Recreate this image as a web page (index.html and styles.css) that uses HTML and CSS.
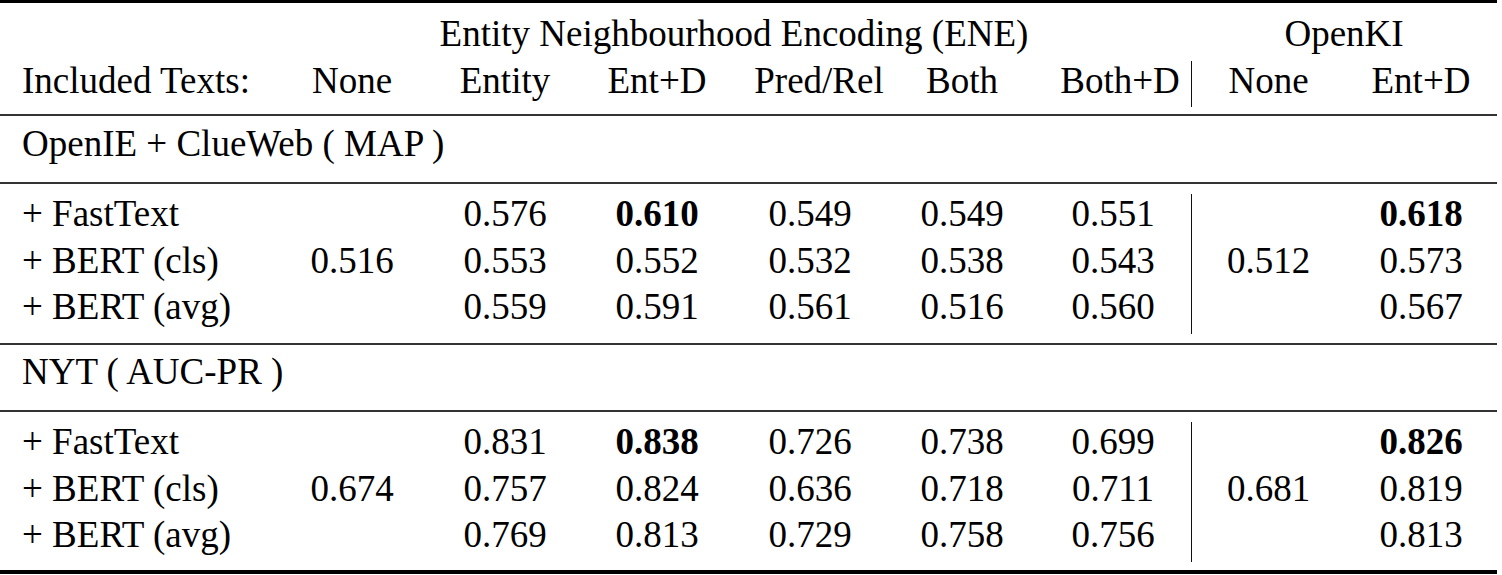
FILE: index.html
```html
<!DOCTYPE html>
<html>
<head>
<meta charset="utf-8">
<link rel="stylesheet" href="styles.css">
</head>
<body>
<div class="table">
  <div class="rule heavy"></div>
  <div class="row head1">
    <div class="cell ene">Entity Neighbourhood Encoding (ENE)</div>
    <div class="cell openki">OpenKI</div>
  </div>
  <div class="row head2">
    <div class="cell label">Included Texts:</div>
    <div class="cell">None</div>
    <div class="cell">Entity</div>
    <div class="cell">Ent+D</div>
    <div class="cell shift-pred">Pred/Rel</div>
    <div class="cell">Both</div>
    <div class="cell shift-bothd">Both+D</div>
    <div class="cell sep">None</div>
    <div class="cell">Ent+D</div>
  </div>
  <div class="rule thin after-head"></div>
  <div class="section first">OpenIE + ClueWeb ( MAP )</div>
  <div class="rule thin after-section"></div>
  <div class="group">
    <div class="row">
      <div class="cell label">+ FastText</div>
      <div class="cell"></div>
      <div class="cell">0.576</div>
      <div class="cell best">0.610</div>
      <div class="cell">0.549</div>
      <div class="cell">0.549</div>
      <div class="cell">0.551</div>
      <div class="cell sep"></div>
      <div class="cell best">0.618</div>
    </div>
    <div class="row">
      <div class="cell label">+ BERT (cls)</div>
      <div class="cell">0.516</div>
      <div class="cell">0.553</div>
      <div class="cell">0.552</div>
      <div class="cell">0.532</div>
      <div class="cell">0.538</div>
      <div class="cell">0.543</div>
      <div class="cell sep">0.512</div>
      <div class="cell">0.573</div>
    </div>
    <div class="row">
      <div class="cell label">+ BERT (avg)</div>
      <div class="cell"></div>
      <div class="cell">0.559</div>
      <div class="cell">0.591</div>
      <div class="cell">0.561</div>
      <div class="cell">0.516</div>
      <div class="cell">0.560</div>
      <div class="cell sep"></div>
      <div class="cell">0.567</div>
    </div>
  </div>
  <div class="rule thin after-group"></div>
  <div class="section">NYT ( AUC-PR )</div>
  <div class="rule thin after-section"></div>
  <div class="group">
    <div class="row">
      <div class="cell label">+ FastText</div>
      <div class="cell"></div>
      <div class="cell">0.831</div>
      <div class="cell best">0.838</div>
      <div class="cell">0.726</div>
      <div class="cell">0.738</div>
      <div class="cell">0.699</div>
      <div class="cell sep"></div>
      <div class="cell best">0.826</div>
    </div>
    <div class="row">
      <div class="cell label">+ BERT (cls)</div>
      <div class="cell">0.674</div>
      <div class="cell">0.757</div>
      <div class="cell">0.824</div>
      <div class="cell">0.636</div>
      <div class="cell">0.718</div>
      <div class="cell">0.711</div>
      <div class="cell sep">0.681</div>
      <div class="cell">0.819</div>
    </div>
    <div class="row">
      <div class="cell label">+ BERT (avg)</div>
      <div class="cell"></div>
      <div class="cell">0.769</div>
      <div class="cell">0.813</div>
      <div class="cell">0.729</div>
      <div class="cell">0.758</div>
      <div class="cell">0.756</div>
      <div class="cell sep"></div>
      <div class="cell">0.813</div>
    </div>
  </div>
  <div class="rule heavy bottom"></div>
</div>
</body>
</html>
```

FILE: styles.css
```css
* {
  box-sizing: border-box;
}

html, body {
  margin: 0;
  padding: 0;
  background: #ffffff;
}

body {
  font-family: "Liberation Serif", "Times New Roman", serif;
  font-size: 37px;
  color: #000000;
}

.table {
  width: 1497px;
  display: flex;
  flex-direction: column;
}

.rule {
  width: 100%;
  background: #000000;
}

.rule.heavy {
  height: 3px;
  margin-bottom: 11px;
}

.rule.heavy.bottom {
  height: 4px;
  margin-top: 8.5px;
  margin-bottom: 0;
}

.rule.thin {
  height: 2px;
  background: #333333;
}

.rule.after-head {
  margin-top: 7px;
}

.rule.after-section {
  margin-top: 11.5px;
}

.rule.after-group {
  margin-top: 9.5px;
}

.row {
  display: grid;
  grid-template-columns: 277px 150px 156px 148px 158px 146px 156px 154px 152px;
}

.cell {
  height: 46.5px;
  line-height: 40.5px;
  padding-bottom: 6px;
  text-align: center;
  white-space: nowrap;
}

.cell.label {
  text-align: left;
  padding-left: 22px;
}

.cell.ene {
  grid-column: 2 / 8;
}

.cell.openki {
  grid-column: 8 / 10;
}

.cell.shift-pred {
  padding-left: 18px;
}

.cell.shift-bothd {
  padding-left: 14px;
}

.head2 .cell.sep,
.group .cell.sep {
  border-left: 1px solid #111111;
}

.cell.best {
  font-weight: bold;
}

.section {
  height: 46.5px;
  line-height: 40.5px;
  padding-bottom: 6px;
  padding-left: 22px;
  margin-top: 7px;
  white-space: nowrap;
}

.section.first {
  margin-top: 8px;
}

.group {
  margin-top: 10px;
  display: flex;
  flex-direction: column;
}
```
